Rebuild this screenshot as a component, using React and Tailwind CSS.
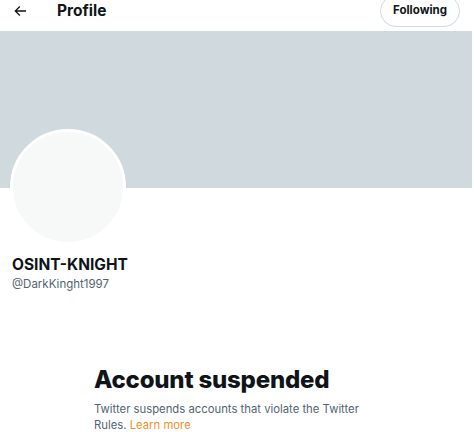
import React from 'react';

const BackArrow = () => (
  <svg viewBox="0 0 24 24" className="w-4 h-4 text-[#0f1419]" fill="currentColor">
    <path d="M7.414 13l5.043 5.04-1.414 1.42L3.586 12l7.457-7.46 1.414 1.42L7.414 11H21v2H7.414z" />
  </svg>
);

const App = () => {
  return (
    <div className="w-[474px] h-[432px] overflow-hidden bg-white font-['Inter',sans-serif] text-[#0f1419]">
      {/* header */}
      <div className="h-[22px] flex items-center pl-[12px] pr-[14px] mb-[9px]">
        <BackArrow />
        <span className="ml-[29px] text-[15.5px] font-bold leading-5">Profile</span>
        <button className="ml-auto h-[32px] w-[80px] rounded-full border border-[#cfd9de] text-[11.5px] font-bold bg-white text-[#0f1419]">
          Following
        </button>
      </div>

      {/* banner */}
      <div className="h-[157px] mr-[2px] bg-[#cfd9de]" />

      {/* avatar */}
      <div className="ml-[10px] -mt-[59px] w-[116px] h-[116px] rounded-full border-[3px] border-white bg-[#f7f9f9]" />

      {/* name */}
      <div className="pl-[12px] mt-[10px]">
        <div className="text-[15.5px] font-bold leading-5">OSINT-KNIGHT</div>
        <div className="text-[11.5px] text-[#536471] leading-4 mt-[1px]">@DarkKinght1997</div>
      </div>

      {/* suspended */}
      <div className="pl-[94px] mt-[74px]">
        <h2 className="text-[24px] font-extrabold leading-7 tracking-[-0.2px]">Account suspended</h2>
        <p className="mt-[7px] w-[290px] text-[11.3px] leading-4 text-[#536471]">
          Twitter suspends accounts that violate the Twitter Rules.{' '}
          <span className="text-[#f4902c]">Learn more</span>
        </p>
      </div>
    </div>
  );
};

export default App;
